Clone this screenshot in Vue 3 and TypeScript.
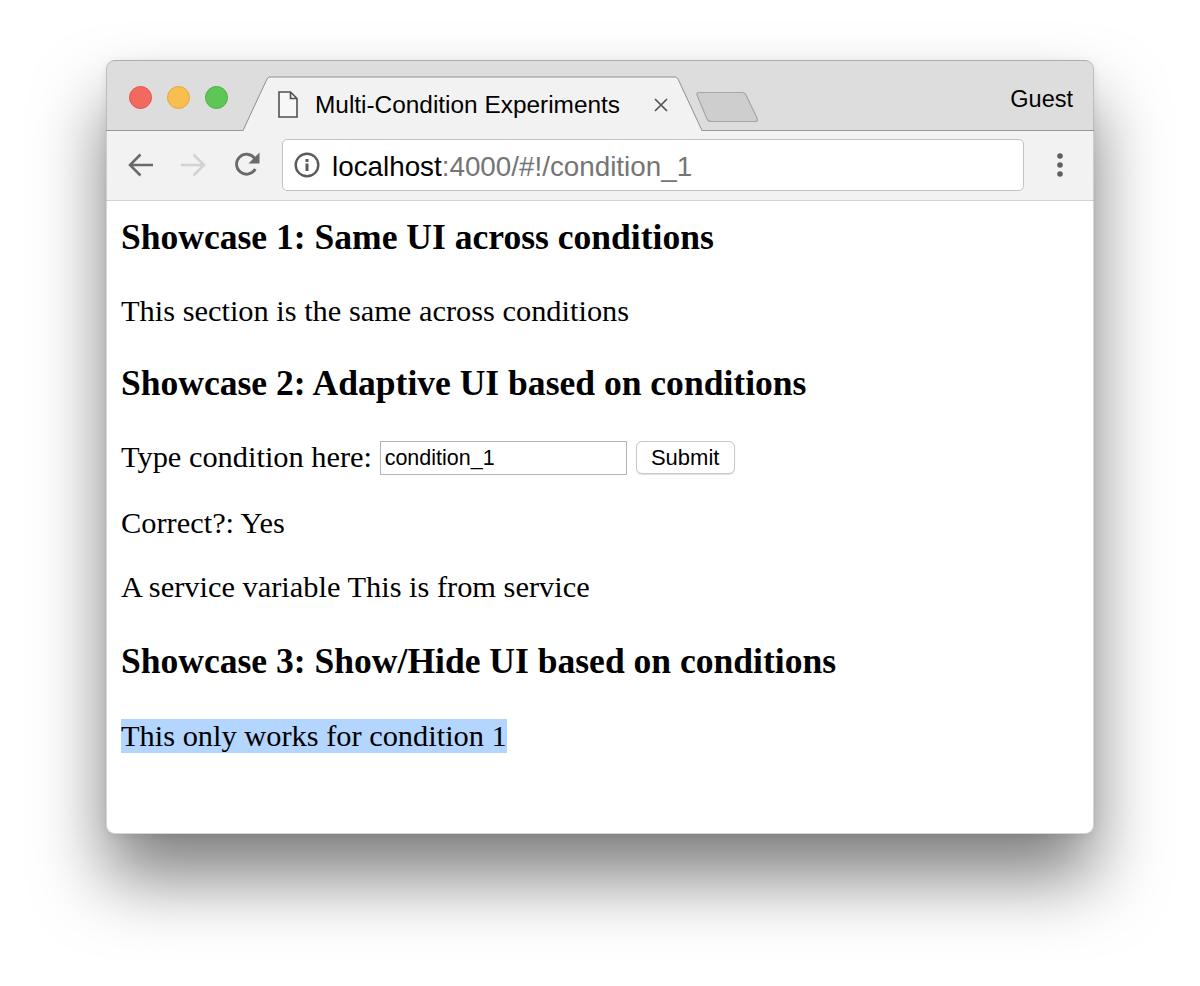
<script setup lang="ts">
const lights: string[] = ['red', 'yellow', 'green']
</script>

<template>
  <div class="stage">
    <div class="window">
      <header class="tabstrip">
        <div class="lights">
          <span v-for="l in lights" :key="l" class="light" :class="l"></span>
        </div>
        <div class="tab">
          <svg class="tab-shape" width="460" height="55" viewBox="0 0 460 55">
            <path d="M0 55 L24 3 Q25 1 27 1 H432 Q434 1 435 3 L459 55 Z" fill="#f2f2f2" />
            <path d="M0 54.500 L24 3 Q25 1 27 1 H432 Q434 1 435 3 L459 54.500" fill="none" stroke="#8f8f8f" stroke-width="1" />
          </svg>
          <svg class="file-icon" width="20" height="27" viewBox="0 0 20 27">
            <path d="M1 1 H12.500 L19 7.500 V26 H1 Z M12.500 1 V7.500 H19" fill="#f7f7f7" stroke="#505050" stroke-width="1.600" />
          </svg>
          <span class="tab-title">Multi-Condition Experiments</span>
          <svg class="tab-close" width="14" height="14" viewBox="0 0 14 14">
            <path d="M1 1 L13 13 M13 1 L1 13" stroke="#555" stroke-width="1.700" fill="none" />
          </svg>
        </div>
        <svg class="new-tab" width="64" height="32" viewBox="0 0 64 32">
          <path d="M3 1.500 H46 Q49 1.500 50 4 L61 27 Q62.500 30.500 59 30.500 H15 Q12 30.500 11 28 L1 4 Q0.500 1.500 3 1.500 Z" fill="#cecece" stroke="#a6a6a6" stroke-width="1.200" />
        </svg>
        <span class="guest">Guest</span>
      </header>

      <nav class="toolbar">
        <svg class="tool" width="28" height="28" viewBox="0 0 28 28">
          <path d="M27 14 H4 M14.500 3.500 L4 14 L14.500 24.500" fill="none" stroke="#6a6a6a" stroke-width="2.600" />
        </svg>
        <svg class="tool fwd" width="28" height="28" viewBox="0 0 28 28">
          <path d="M2 14 H25 M14.500 3.500 L25 14 L14.500 24.500" fill="none" stroke="#d2d2d2" stroke-width="2.600" />
        </svg>
        <svg class="tool reload" width="28" height="28" viewBox="0 0 28 28">
          <path d="M22.300 18 A10 10 0 1 1 21.500 7.200" fill="none" stroke="#6a6a6a" stroke-width="2.800" />
          <path d="M26.500 1.500 V12.500 H15.500 Z" fill="#6a6a6a" />
        </svg>
        <div class="omnibox">
          <svg width="26" height="26" viewBox="0 0 26 26" class="info">
            <circle cx="13" cy="13" r="11.300" fill="none" stroke="#5a5a5a" stroke-width="2.400" />
            <rect x="11.500" y="11.500" width="3" height="7.500" fill="#5a5a5a" />
            <rect x="11.500" y="7" width="3" height="3" fill="#5a5a5a" />
          </svg>
          <span class="url"><span class="host">localhost</span>:4000/#!/condition_1</span>
        </div>
        <svg class="menu" width="8" height="26" viewBox="0 0 8 26">
          <circle cx="4" cy="4" r="2.800" fill="#5f5f5f" />
          <circle cx="4" cy="13" r="2.800" fill="#5f5f5f" />
          <circle cx="4" cy="22" r="2.800" fill="#5f5f5f" />
        </svg>
      </nav>

      <main class="page">
        <h3>Showcase 1: Same UI across conditions</h3>
        <p>This section is the same across conditions</p>
        <h3>Showcase 2: Adaptive UI based on conditions</h3>
        <p class="form-row">
          Type condition here:
          <input class="field" type="text" value="condition_1" />
          <button class="submit" type="button">Submit</button>
        </p>
        <p>Correct?: Yes</p>
        <p>A service variable This is from service</p>
        <h3 class="last-heading">Showcase 3: Show/Hide UI based on conditions</h3>
        <p><span class="selected">This only works for condition 1</span></p>
      </main>
    </div>
  </div>
</template>

<style scoped>
.stage {
  width: 1200px;
  height: 986px;
  padding: 60px 106px 0;
  box-sizing: border-box;
  background: #fff;
  overflow: hidden;
}
.window {
  width: 988px;
  height: 774px;
  border-radius: 9px;
  overflow: hidden;
  background: #fff;
  display: flex;
  flex-direction: column;
  outline: 1px solid rgba(120, 120, 120, 0.3);
  outline-offset: -1px;
  box-shadow: 0 44px 70px rgba(0, 0, 0, 0.5), 0 2px 10px rgba(0, 0, 0, 0.08);
}
.tabstrip {
  height: 71px;
  box-sizing: border-box;
  flex: none;
  background: #dddddd;
  border-top: 1px solid #c8c8c8;
  border-bottom: 1px solid #9a9a9a;
  display: flex;
  align-items: flex-end;
}
.lights {
  display: flex;
  gap: 15px;
  align-self: flex-start;
  margin: 25px 0 0 23px;
}
.light {
  width: 23px;
  height: 23px;
  border-radius: 50%;
  box-sizing: border-box;
}
.red { background: #f1695f; border: 1px solid #e2544a; }
.yellow { background: #f8be4f; border: 1px solid #e5a73a; }
.green { background: #5ec654; border: 1px solid #4cb045; }
.tab {
  position: relative;
  width: 460px;
  height: 55px;
  margin: 0 0 -1px 15px;
  display: flex;
  align-items: center;
}
.tab-shape {
  position: absolute;
  left: 0;
  top: 0;
}
.file-icon {
  position: relative;
  flex: none;
  margin: 1px 0 0 35px;
}
.tab-title {
  position: relative;
  flex: none;
  margin: 2px 0 0 17px;
  width: 340px;
  font-family: "Liberation Sans", sans-serif;
  font-size: 24.400px;
  color: #000;
  white-space: nowrap;
}
.tab-close {
  position: relative;
  flex: none;
  margin: 2px 0 0 -1px;
}
.new-tab {
  flex: none;
  margin: 0 0 7px -7px;
}
.guest {
  margin-left: auto;
  align-self: flex-start;
  margin-top: 25px;
  margin-right: 21px;
  font-family: "Liberation Sans", sans-serif;
  font-size: 23.500px;
  color: #000;
}
.toolbar {
  height: 70px;
  flex: none;
  box-sizing: border-box;
  background: #f2f2f2;
  border-bottom: 1px solid #d2d2d2;
  display: flex;
  align-items: center;
  padding: 0 0 1px 20px;
}
.tool { flex: none; }
.fwd { margin-left: 25px; }
.reload { margin-left: 26px; }
.omnibox {
  margin-left: 21px;
  width: 742px;
  height: 52px;
  box-sizing: border-box;
  flex: none;
  background: #fff;
  border: 1px solid #c2c2c2;
  border-radius: 5px;
  display: flex;
  align-items: center;
  padding: 4px 0 0 11px;
  font-family: "Liberation Sans", sans-serif;
  font-size: 27.800px;
  color: #757575;
}
.info { flex: none; margin-top: -4px; }
.url { margin-left: 12px; white-space: nowrap; }
.host { color: #000; }
.menu {
  flex: none;
  margin-left: 32px;
}
.page {
  flex: 1;
  min-height: 0;
  padding: 0 15px;
  font-family: "Liberation Serif", "Times New Roman", serif;
  font-size: 30.400px;
  color: #000;
}
h3 {
  font-size: 35.550px;
  font-weight: bold;
  margin: 15.500px 0 36px;
  line-height: 41px;
}
h3:not(:first-child) {
  margin-top: 34px;
}
h3.last-heading {
  margin-top: 36px;
  margin-bottom: 37px;
}
p {
  margin: 29px 0;
  line-height: 35px;
}
.form-row {
  white-space: nowrap;
  margin-bottom: 31px;
}
.field {
  width: 247px;
  height: 34px;
  box-sizing: border-box;
  border: 1px solid #b4b4b4;
  padding: 0 4px;
  margin: 0 9px 0 0;
  font-family: "Liberation Sans", sans-serif;
  font-size: 21.500px;
  color: #000;
  vertical-align: 2px;
  background: #fff;
  border-radius: 0;
  outline: none;
}
.submit {
  width: 99px;
  height: 33px;
  box-sizing: border-box;
  border: 1px solid #c8c8c8;
  border-radius: 6px;
  background: #fff;
  box-shadow: 0 1px 1px rgba(0, 0, 0, 0.12);
  font-family: "Liberation Sans", sans-serif;
  font-size: 22px;
  color: #000;
  padding: 0;
  vertical-align: 2px;
}
.selected {
  background: #b4d5fd;
}
</style>
